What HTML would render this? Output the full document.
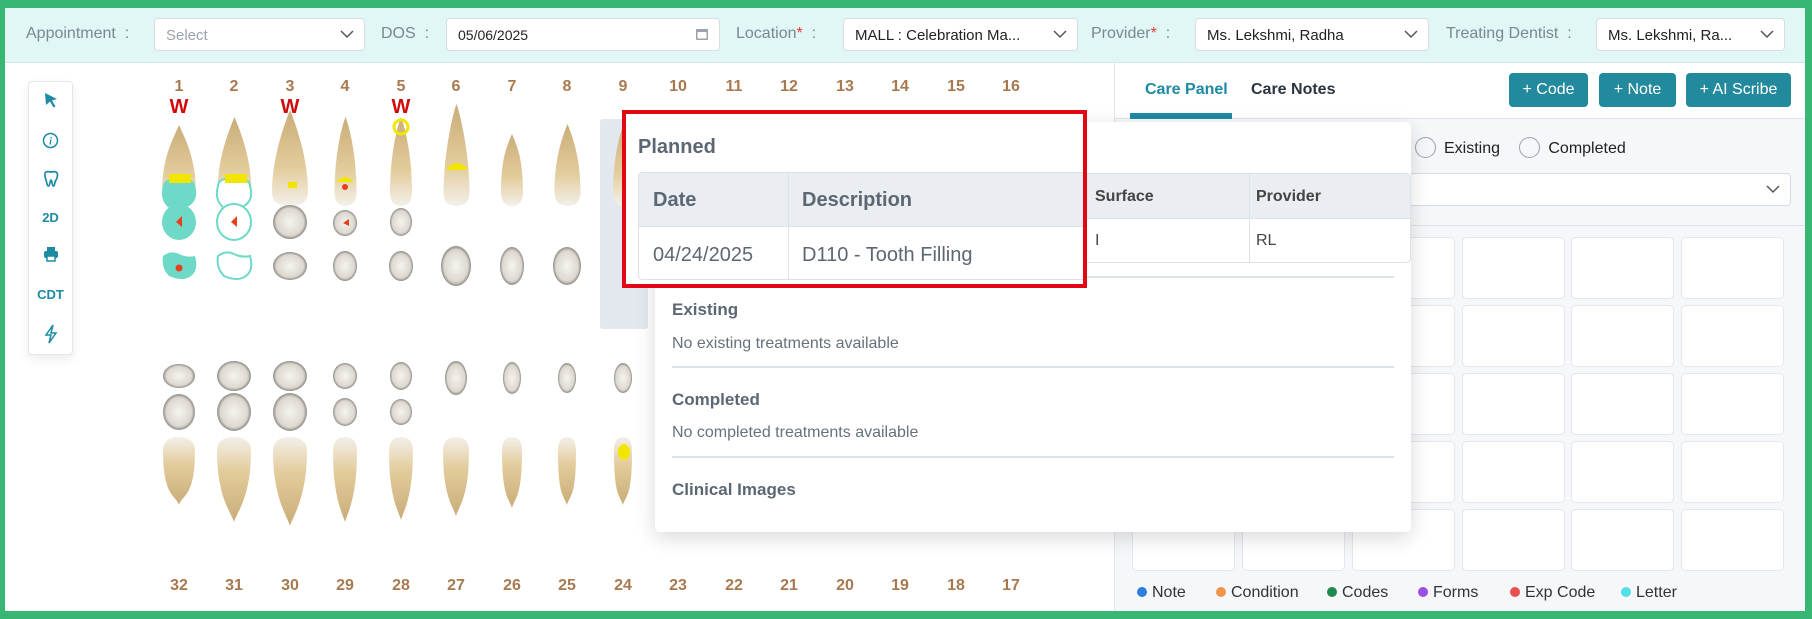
<!DOCTYPE html>
<html><head><meta charset="utf-8"><style>
*{box-sizing:border-box;margin:0;padding:0}
body{width:1812px;height:619px;overflow:hidden;background:#38b673;font-family:"Liberation Sans",Arial,sans-serif;position:relative}
.main{position:absolute;left:5px;top:8px;width:1800px;height:603px;background:#fff;overflow:hidden}
.hdr{position:absolute;left:0;top:0;width:1800px;height:55px;background:#e0f7f5;border-bottom:1px solid #d3e6e4}
.lbl{position:absolute;top:17px;font-size:16px;color:#7b8793}
.lbl i{color:#e53935;font-style:normal}
.inp{position:absolute;top:10px;height:33px;background:#fff;border:1px solid #d5dde2;border-radius:4px;font-size:15px;color:#222;padding:8px 11px;white-space:nowrap;overflow:hidden}
.chev{position:absolute;right:10px;top:8px;width:14px;height:14px}
.abs{position:absolute}
.num{position:absolute;width:40px;margin-left:-20px;text-align:center;font-weight:bold;color:#a8794f;font-size:16px}
.tb{position:absolute;left:23px;top:73px;width:45px;height:274px;background:#fff;border:1px solid #e2e7ec;border-radius:4px;box-shadow:0 4px 10px rgba(0,0,0,.08)}
.tb div{position:absolute;left:0;width:43px;text-align:center;color:#1d8aa3;font-weight:bold;font-size:13px}
.rp{position:absolute;left:1109px;top:55px;width:691px;height:548px;background:#f5f7fa;border-left:1px solid #e2e6ea}
.tabs{position:absolute;left:0;top:0;width:691px;height:56px;background:#fff;border-bottom:1px solid #dde3e8}
.btn{position:absolute;top:10px;height:34px;background:#23899c;color:#fff;border-radius:4px;font-size:16px;padding:8px 0;text-align:center}
.cell{position:absolute;width:103px;height:62px;background:#fff;border:1px solid #e3e7ec;border-radius:5px}
.leg{position:absolute;top:521px;font-size:16px;color:#333}
.leg b{display:inline-block;width:10px;height:10px;border-radius:50%;margin-right:5px;vertical-align:0}
.pop{position:absolute;left:650px;top:114px;width:756px;height:410px;background:#fff;border-radius:5px;box-shadow:0 6px 20px rgba(0,0,0,.15)}
.sec{position:absolute;left:17px;font-weight:bold;font-size:17px;color:#5c6773}
.na{position:absolute;left:17px;font-size:16px;color:#66717c}
.hr{position:absolute;left:17px;width:722px;height:2px;background:#dde2e8}
.red{position:absolute;left:617px;top:102px;width:465px;height:178px;border:4px solid #e30613;background:#fff;overflow:hidden}
</style></head><body>
<div class="main">
<div class="hdr">
<div class="lbl" style="left:21px">Appointment &nbsp;:</div>
<div class="inp" style="left:149px;width:211px;color:#9aa3ab">Select<svg class="chev" viewBox="0 0 14 14"><path d="M1 4l6 6 6-6" fill="none" stroke="#555" stroke-width="1.5"/></svg></div>
<div class="lbl" style="left:376px">DOS &nbsp;:</div>
<div class="inp" style="left:441px;width:274px;font-size:14px">05/06/2025<svg class="chev" viewBox="0 0 14 14"><rect x="1" y="2" width="12" height="11" rx="1" fill="#9aa3ab"/><rect x="2.5" y="5" width="9" height="6.5" fill="#fff"/></svg></div>
<div class="lbl" style="left:731px">Location<i>*</i> &nbsp;:</div>
<div class="inp" style="left:838px;width:235px">MALL : Celebration Ma...<svg class="chev" viewBox="0 0 14 14"><path d="M1 4l6 6 6-6" fill="none" stroke="#555" stroke-width="1.5"/></svg></div>
<div class="lbl" style="left:1086px">Provider<i>*</i> &nbsp;:</div>
<div class="inp" style="left:1190px;width:234px">Ms. Lekshmi, Radha<svg class="chev" viewBox="0 0 14 14"><path d="M1 4l6 6 6-6" fill="none" stroke="#555" stroke-width="1.5"/></svg></div>
<div class="lbl" style="left:1441px">Treating Dentist &nbsp;:</div>
<div class="inp" style="left:1591px;width:189px">Ms. Lekshmi, Ra...<svg class="chev" viewBox="0 0 14 14"><path d="M1 4l6 6 6-6" fill="none" stroke="#555" stroke-width="1.5"/></svg></div>
</div>

<div class="tb">
<div style="top:10px"><svg width="16" height="18" viewBox="0 0 16 18"><path d="M2 1l12 6-5 1.5 3.5 6-2 1-3.5-6L3 13z" fill="#1d8aa3"/></svg></div>
<div style="top:50px"><svg width="17" height="17" viewBox="0 0 17 17"><circle cx="8.5" cy="8.5" r="7" fill="none" stroke="#1d8aa3" stroke-width="1.5"/><text x="8.5" y="12.5" font-size="10" font-style="italic" text-anchor="middle" fill="#1d8aa3" font-family="Liberation Serif">i</text></svg></div>
<div style="top:88px"><svg width="16" height="18" viewBox="0 0 16 18"><path d="M3 2c2-1 3 0 5 0s3-1 5 0 2 5 0 8-1 6-2.5 6S9 10 8 10s-1 6-2.5 6S4 13 3 10 1 3 3 2z" fill="none" stroke="#1d8aa3" stroke-width="1.7"/></svg></div>
<div style="top:128px">2D</div>
<div style="top:164px"><svg width="16" height="16" viewBox="0 0 16 16"><rect x="4" y="1" width="8" height="4" fill="#1d8aa3"/><rect x="1" y="5" width="14" height="7" rx="2" fill="#1d8aa3"/><rect x="4" y="10" width="8" height="5" fill="#fff" stroke="#1d8aa3" stroke-width="1.5"/></svg></div>
<div style="top:205px">CDT</div>
<div style="top:242px"><svg width="14" height="20" viewBox="0 0 14 20"><path d="M9 1L2 11h5l-2 8 7-10H7z" fill="none" stroke="#1d8aa3" stroke-width="1.5"/></svg></div>
</div>

<div class="abs" style="left:595px;top:111px;width:48px;height:210px;background:#e3e8ee;border-radius:3px"></div>
<svg id="teeth" class="abs" style="left:0;top:-8px" width="1109" height="611"></svg>

<div class="num" style="left:174px;top:70px">1</div><div class="num" style="left:229px;top:70px">2</div><div class="num" style="left:285px;top:70px">3</div><div class="num" style="left:340px;top:70px">4</div><div class="num" style="left:396px;top:70px">5</div><div class="num" style="left:451px;top:70px">6</div><div class="num" style="left:507px;top:70px">7</div><div class="num" style="left:562px;top:70px">8</div><div class="num" style="left:618px;top:70px">9</div><div class="num" style="left:673px;top:70px">10</div><div class="num" style="left:729px;top:70px">11</div><div class="num" style="left:784px;top:70px">12</div><div class="num" style="left:840px;top:70px">13</div><div class="num" style="left:895px;top:70px">14</div><div class="num" style="left:951px;top:70px">15</div><div class="num" style="left:1006px;top:70px">16</div>
<div class="num" style="left:174px;top:88px;color:#d10a0a;font-size:20px">W</div><div class="num" style="left:285px;top:88px;color:#d10a0a;font-size:20px">W</div><div class="num" style="left:396px;top:88px;color:#d10a0a;font-size:20px">W</div>
<div class="num" style="left:174px;top:569px">32</div><div class="num" style="left:229px;top:569px">31</div><div class="num" style="left:285px;top:569px">30</div><div class="num" style="left:340px;top:569px">29</div><div class="num" style="left:396px;top:569px">28</div><div class="num" style="left:451px;top:569px">27</div><div class="num" style="left:507px;top:569px">26</div><div class="num" style="left:562px;top:569px">25</div><div class="num" style="left:618px;top:569px">24</div><div class="num" style="left:673px;top:569px">23</div><div class="num" style="left:729px;top:569px">22</div><div class="num" style="left:784px;top:569px">21</div><div class="num" style="left:840px;top:569px">20</div><div class="num" style="left:895px;top:569px">19</div><div class="num" style="left:951px;top:569px">18</div><div class="num" style="left:1006px;top:569px">17</div>

<div class="rp">
<div class="tabs">
<div class="abs" style="left:30px;top:18px;font-size:16px;font-weight:bold;color:#1d8aa3">Care Panel</div>
<div class="abs" style="left:15px;top:50px;width:102px;height:6px;background:#1d8aa3"></div>
<div class="abs" style="left:136px;top:18px;font-size:16px;font-weight:bold;color:#2b3440">Care Notes</div>
<div class="btn" style="left:394px;width:79px">+ Code</div>
<div class="btn" style="left:484px;width:77px">+ Note</div>
<div class="btn" style="left:571px;width:105px">+ AI Scribe</div>
</div>
<div class="abs" style="left:300px;top:74px;font-size:16px;color:#222"><span style="display:inline-block;width:21px;height:21px;border:1px solid #9aa3ab;border-radius:50%;vertical-align:-5px;margin-right:8px"></span>Existing &nbsp;&nbsp;<span style="display:inline-block;width:21px;height:21px;border:1px solid #9aa3ab;border-radius:50%;vertical-align:-5px;margin-right:8px;margin-left:6px"></span>Completed</div>
<div class="abs" style="left:15px;top:110px;width:661px;height:33px;background:#fff;border:1px solid #d5dde2;border-radius:4px"><svg class="chev" viewBox="0 0 14 14"><path d="M1 4l6 6 6-6" fill="none" stroke="#555" stroke-width="1.5"/></svg></div>
<div class="abs" style="left:0;top:162px;width:691px;height:1px;background:#dde3e8"></div>
<div id="cells"></div>
<div class="leg" style="left:22px"><b style="background:#2f7de1"></b>Note</div>
<div class="leg" style="left:101px"><b style="background:#f0964a"></b>Condition</div>
<div class="leg" style="left:212px"><b style="background:#1f8a4c"></b>Codes</div>
<div class="leg" style="left:303px"><b style="background:#9b4fe0"></b>Forms</div>
<div class="leg" style="left:395px"><b style="background:#e85050"></b>Exp Code</div>
<div class="leg" style="left:506px"><b style="background:#4fe0ea"></b>Letter</div>
</div>

<div class="pop">
<div class="abs" style="left:17px;top:51px;width:739px;height:90px;border:1px solid #dde2e8;border-radius:4px;overflow:hidden">
<div class="abs" style="left:0;top:0;width:739px;height:45px;background:#eaeef2;border-bottom:1px solid #dde2e8"></div>
<div class="abs" style="left:422px;top:14px;font-size:16px;font-weight:bold;color:#444">Surface</div>
<div class="abs" style="left:576px;top:0;width:1px;height:90px;background:#dde2e8"></div>
<div class="abs" style="left:583px;top:14px;font-size:16px;font-weight:bold;color:#444">Provider</div>
<div class="abs" style="left:422px;top:58px;font-size:16px;color:#444">I</div>
<div class="abs" style="left:583px;top:58px;font-size:16px;color:#444">RL</div>
</div>
<div class="hr" style="top:154px"></div>
<div class="sec" style="top:178px">Existing</div>
<div class="na" style="top:213px">No existing treatments available</div>
<div class="hr" style="top:244px"></div>
<div class="sec" style="top:268px">Completed</div>
<div class="na" style="top:302px">No completed treatments available</div>
<div class="hr" style="top:334px"></div>
<div class="sec" style="top:358px">Clinical Images</div>
</div>

<div class="red">
<div class="abs" style="left:12px;top:22px;font-size:20px;font-weight:bold;color:#5c6773">Planned</div>
<div class="abs" style="left:12px;top:58px;width:460px;height:108px;border:1px solid #dde2e8;border-radius:4px;overflow:hidden">
<div class="abs" style="left:0;top:0;width:460px;height:54px;background:#eaeef2;border-bottom:1px solid #dde2e8"></div>
<div class="abs" style="left:149px;top:0;width:1px;height:108px;background:#dde2e8"></div>
<div class="abs" style="left:14px;top:16px;font-size:20px;font-weight:bold;color:#5c6773">Date</div>
<div class="abs" style="left:163px;top:16px;font-size:20px;font-weight:bold;color:#5c6773">Description</div>
<div class="abs" style="left:14px;top:71px;font-size:20px;color:#5c6773">04/24/2025</div>
<div class="abs" style="left:163px;top:71px;font-size:20px;color:#5c6773">D110 - Tooth Filling</div>
</div>
</div>
</div>
<script>
var c='';var xs=[17,127,237,347,456,566];var ys=[174,242,310,378,446];
ys.forEach(function(y){xs.forEach(function(x){c+='<div class="cell" style="left:'+x+'px;top:'+y+'px"></div>';});});
document.getElementById('cells').innerHTML=c;
var s='<defs><linearGradient id="ru" x1="0" y1="0" x2="0" y2="1"><stop offset="0" stop-color="#c9ad78"/><stop offset=".6" stop-color="#e3cc9c"/><stop offset="1" stop-color="#f3f0ea"/></linearGradient><linearGradient id="rl" x1="0" y1="1" x2="0" y2="0"><stop offset="0" stop-color="#c9ad78"/><stop offset=".6" stop-color="#e3cc9c"/><stop offset="1" stop-color="#f3f0ea"/></linearGradient><radialGradient id="oc"><stop offset="0" stop-color="#f6f4ef"/><stop offset=".8" stop-color="#dcd8d0"/><stop offset="1" stop-color="#8d8a85"/></radialGradient></defs>';
function X(i){return 174+55.5*(i-1);}
var up=[[1,17,125],[2,17,117],[3,18,110],[4,11,117],[5,11,117],[6,13,104],[7,11,134],[8,13,124],[9,12,120]];
up.forEach(function(t){var x=X(t[0]),w=t[1],top=t[2],b=206;
if(t[0]==9){x=620;}
s+='<path d="M'+(x-w)+' '+(b-14)+' C'+(x-w)+' '+(b-50)+' '+(x-4)+' '+(top+10)+' '+x+' '+top+' C'+(x+4)+' '+(top+10)+' '+(x+w)+' '+(b-50)+' '+(x+w)+' '+(b-14)+' Q'+(x+w)+' '+b+' '+x+' '+b+' Q'+(x-w)+' '+b+' '+(x-w)+' '+(b-14)+'Z" fill="url(#ru)"/>';});
s+='<path d="M158 186q0-8 16-8t16 8q4 14-6 20t-20 2q-10-8-6-22z" fill="#6dd9c6"/>';
s+='<path d="M213 186q0-8 16-8t16 8q4 14-6 20t-20 2q-10-8-6-22z" fill="#fff" stroke="#6dd9c6" stroke-width="2"/>';
s+='<rect x="164" y="174" width="22" height="9" fill="#f2e600"/><rect x="220" y="174" width="22" height="9" fill="#f2e600"/>';
s+='<rect x="283" y="182" width="9" height="6" fill="#f2e600"/><path d="M331 182q9-10 18 0z" fill="#f2e600"/><circle cx="340" cy="187" r="3" fill="#e8401c"/>';
s+='<circle cx="396" cy="127" r="7" fill="none" stroke="#f2e600" stroke-width="3"/><path d="M441 170q11-14 22 0z" fill="#f2e600"/>';
s+='<ellipse cx="174" cy="222" rx="17" ry="18" fill="#6dd9c6"/><path d="M177 216l-6 6 6 5z" fill="#e8401c"/>';
s+='<ellipse cx="229" cy="222" rx="17" ry="18" fill="#fff" stroke="#6dd9c6" stroke-width="2"/><path d="M232 216l-6 6 6 5z" fill="#e8401c"/>';
s+='<ellipse cx="285" cy="222" rx="17" ry="17" fill="url(#oc)"/><ellipse cx="340" cy="223" rx="12" ry="13" fill="url(#oc)"/><path d="M344 219l-6 4 6 3z" fill="#e8401c"/><ellipse cx="396" cy="222" rx="11" ry="14" fill="url(#oc)"/>';
s+='<path d="M158 256q8-6 16-2t16 2q4 14-4 20t-22 0q-8-8-6-20z" fill="#6dd9c6"/><circle cx="174" cy="268" r="3.5" fill="#e8401c"/>';
s+='<path d="M213 256q8-6 16-2t16 2q4 14-4 20t-22 0q-8-8-6-20z" fill="#fff" stroke="#6dd9c6" stroke-width="2"/>';
[[285,17,14],[340,12,15],[396,12,15],[451,15,20],[507,12,19],[562,14,19]].forEach(function(t){s+='<ellipse cx="'+t[0]+'" cy="266" rx="'+t[1]+'" ry="'+t[2]+'" fill="url(#oc)"/>';});
[[179,16,12],[229,17,15],[285,17,15],[340,12,13],[396,11,14],[451,11,17],[507,9,16],[562,9,15],[618,9,15]].forEach(function(t,k){s+='<ellipse cx="'+(k==0?174:t[0])+'" cy="'+(k<5?376:378)+'" rx="'+t[1]+'" ry="'+t[2]+'" fill="url(#oc)"/>';});
[[174,16],[229,17],[285,17],[340,12],[396,11]].forEach(function(t){s+='<ellipse cx="'+t[0]+'" cy="412" rx="'+t[1]+'" ry="'+(t[1]+2)+'" fill="url(#oc)"/>';});
[[174,16,505],[229,17,522],[285,17,526],[340,12,522],[396,12,520],[451,13,516],[507,10,508],[562,9,505],[618,9,505]].forEach(function(t){var x=t[0],w=t[1],b=t[2],top=437;
s+='<path d="M'+(x-w)+' '+(top+14)+' Q'+(x-w)+' '+top+' '+x+' '+top+' Q'+(x+w)+' '+top+' '+(x+w)+' '+(top+14)+' C'+(x+w)+' '+(top+60)+' '+(x+3)+' '+(b-10)+' '+x+' '+b+' C'+(x-3)+' '+(b-10)+' '+(x-w)+' '+(top+60)+' '+(x-w)+' '+(top+14)+'Z" fill="url(#rl)"/>';});
s+='<ellipse cx="619" cy="452" rx="6" ry="8" fill="#f2e600"/>';
document.getElementById('teeth').innerHTML=s;
</script>
</body></html>
